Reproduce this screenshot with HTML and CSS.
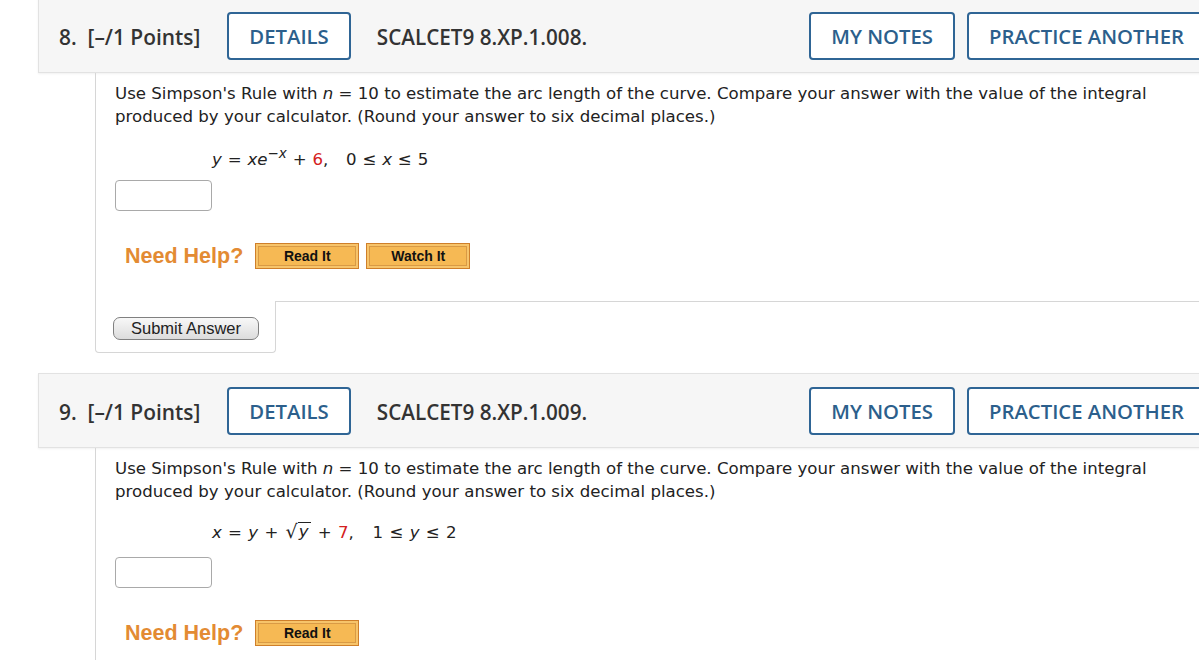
FILE: index.html
```html
<!DOCTYPE html>
<html>
<head>
<meta charset="utf-8">
<link rel="stylesheet" href="styles.css">
</head>
<body>
<div class="page">
  <section class="question first">
    <div class="q-header">
      <span class="q-num">8.&nbsp; [–/1 Points]</span>
      <button class="btn-outline details">DETAILS</button>
      <span class="q-code">SCALCET9 8.XP.1.008.</span>
      <div class="q-actions">
        <button class="btn-outline">MY NOTES</button>
        <button class="btn-outline">PRACTICE ANOTHER</button>
      </div>
    </div>
    <div class="q-body">
      <div class="q-content">
        <p class="prompt">Use Simpson's Rule with <i>n</i> = 10 to estimate the arc length of the curve. Compare your answer with the value of the integral produced by your calculator. (Round your answer to six decimal places.)</p>
        <div class="equation"><i>y</i> = <i>xe</i><sup>−<i>x</i></sup> + <span class="red">6</span>,&nbsp;&nbsp; 0 ≤ <i>x</i> ≤ 5</div>
        <input class="answer" type="text">
        <div class="help">
          <span class="help-label">Need Help?</span>
          <button class="help-btn">Read It</button>
          <button class="help-btn">Watch It</button>
        </div>
      </div>
      <div class="submit-tab"><button class="submit">Submit Answer</button></div>
    </div>
  </section>

  <section class="question">
    <div class="q-header">
      <span class="q-num">9.&nbsp; [–/1 Points]</span>
      <button class="btn-outline details">DETAILS</button>
      <span class="q-code">SCALCET9 8.XP.1.009.</span>
      <div class="q-actions">
        <button class="btn-outline">MY NOTES</button>
        <button class="btn-outline">PRACTICE ANOTHER</button>
      </div>
    </div>
    <div class="q-body">
      <div class="q-content">
        <p class="prompt">Use Simpson's Rule with <i>n</i> = 10 to estimate the arc length of the curve. Compare your answer with the value of the integral produced by your calculator. (Round your answer to six decimal places.)</p>
        <div class="equation eq2"><i>x</i> = <i>y</i> + <span class="sqrt"><span class="radic">√</span><span class="radicand"><i>y</i></span></span> + <span class="red">7</span>,&nbsp;&nbsp; 1 ≤ <i>y</i> ≤ 2</div>
        <input class="answer" type="text">
        <div class="help">
          <span class="help-label">Need Help?</span>
          <button class="help-btn">Read It</button>
        </div>
      </div>
    </div>
  </section>
</div>
</body>
</html>
```

FILE: styles.css
```css
html, body {
  margin: 0;
  padding: 0;
  background: #ffffff;
  overflow: hidden;
}

.page {
  width: 1240px;
  margin-top: -2px;
}

.question {
  margin-bottom: 20px;
}

.q-header {
  margin-left: 38px;
  width: 1175px;
  height: 75px;
  box-sizing: border-box;
  display: flex;
  align-items: center;
  padding: 0 7px 0 20px;
  background: #f6f6f6;
  border: 1px solid #e2e2e2;
  border-right: none;
  box-shadow: 0 1px 2px rgba(0, 0, 0, 0.06);
  font-family: "Open Sans", "Liberation Sans", sans-serif;
  font-weight: 600;
  color: #333333;
}

.q-num {
  font-size: 20.9px;
  padding-top: 2px;
}

.q-code {
  font-size: 20.7px;
  margin-left: 26px;
  padding-top: 2px;
}

.btn-outline {
  height: 48px;
  box-sizing: border-box;
  padding: 0 20px;
  background: #ffffff;
  border: 2px solid #2f6595;
  border-radius: 4px;
  font-family: "Open Sans", "Liberation Sans", sans-serif;
  font-weight: 600;
  font-size: 20.3px;
  color: #2c5f8c;
  letter-spacing: 0;
}

.details {
  margin-left: 27px;
}

.q-actions {
  margin-left: auto;
  display: flex;
  gap: 12px;
}

.q-body {
  margin-left: 95px;
}

.q-content {
  border-left: 1px solid #d6d6d6;
  border-bottom: 1px solid #d6d6d6;
  padding: 9px 0 32px 19px;
  font-family: "DejaVu Sans", Verdana, sans-serif;
  font-size: 16.6px;
  color: #222222;
}

.prompt {
  margin: 0;
  line-height: 23px;
  width: 1060px;
}

.equation {
  margin: 20px 0 0 97px;
  line-height: 24px;
  word-spacing: 0.6px;
}

.equation sup {
  font-size: 13.5px;
  vertical-align: 7px;
  line-height: 0;
}

.eq2 {
  margin-top: 18px;
  margin-bottom: 12px;
  word-spacing: 1px;
}

.red {
  color: #d42020;
}

.sqrt {
  display: inline-flex;
  align-items: flex-end;
  margin: 0 1px;
}

.radic {
  font-size: 19px;
  line-height: 20px;
}

.radicand {
  border-top: 1px solid #222;
  padding: 0 2px 0 1px;
  line-height: 18px;
}

.answer {
  display: block;
  margin-top: 8px;
  width: 97px;
  height: 31px;
  box-sizing: border-box;
  border: 1px solid #a9a9a9;
  border-radius: 4px;
  background: #fff;
}

.help {
  display: flex;
  align-items: center;
  margin-top: 32px;
  gap: 7px;
}

.help-label {
  font-family: "Liberation Sans", Arial, sans-serif;
  font-weight: bold;
  font-size: 21.5px;
  color: #e38b33;
  margin-left: 10px;
  margin-right: 5px;
}

.help-btn {
  width: 104px;
  height: 26px;
  box-sizing: border-box;
  background: #f6b954;
  border: 1px solid #cf7f2a;
  box-shadow: inset 0 0 0 2px #f7c46a, inset 0 0 0 3px #d99a45;
  font-family: "Liberation Sans", Arial, sans-serif;
  font-weight: bold;
  font-size: 14px;
  color: #111;
  padding: 0;
}

.submit-tab {
  width: 181px;
  margin-top: -1px;
  box-sizing: border-box;
  background: #ffffff;
  border: 1px solid #d6d6d6;
  border-top: none;
  border-radius: 0 0 4px 4px;
  padding: 16px 0 12px 17px;
}

.submit {
  display: block;
  width: 146px;
  height: 23px;
  box-sizing: border-box;
  border: 1px solid #808080;
  border-radius: 7px;
  background: linear-gradient(#f8f8f8, #dcdcdc);
  font-family: "Liberation Sans", Arial, sans-serif;
  font-size: 16.5px;
  color: #222;
  padding: 0;
}
```
